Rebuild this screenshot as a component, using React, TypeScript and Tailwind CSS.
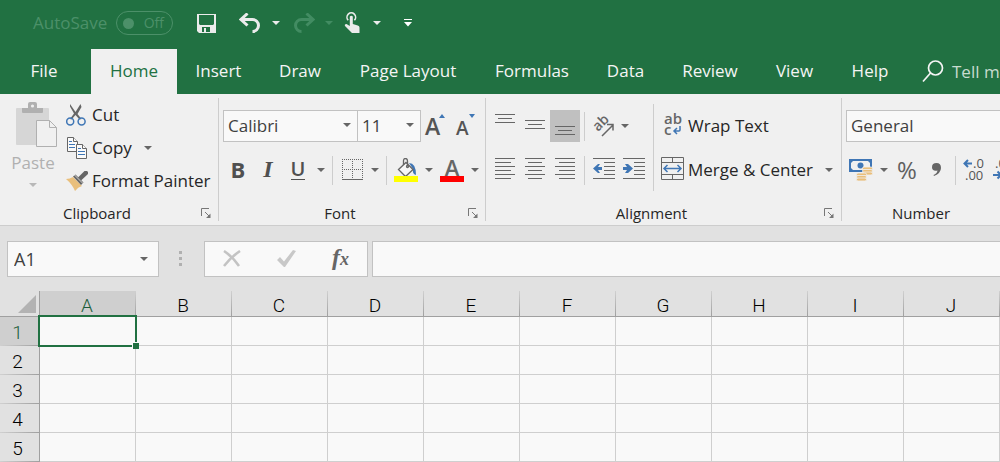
import type { ReactNode } from 'react'
import clsx from 'clsx'

const tabs = [
  { name: 'File', width: 'w-[88px] mr-[3px]' },
  { name: 'Home', width: 'w-[86px]' },
  { name: 'Insert', width: 'w-[83px]' },
  { name: 'Draw', width: 'w-[80px]' },
  { name: 'Page Layout', width: 'w-[136px]' },
  { name: 'Formulas', width: 'w-[112px]' },
  { name: 'Data', width: 'w-[75px]' },
  { name: 'Review', width: 'w-[94px]' },
  { name: 'View', width: 'w-[75px]' },
  { name: 'Help', width: 'w-[76px]' },
]

const columns = 'ABCDEFGHIJ'.split('')
const rows = [1, 2, 3, 4, 5]

function Caret({ className = 'fill-[#666]' }: { className?: string }) {
  return (
    <svg width="8" height="4" viewBox="0 0 8 4" aria-hidden="true" className={className}>
      <path d="M0 0h8L4 4z" />
    </svg>
  )
}

function DropButton({ label, caret, className }: { label: string; caret?: string; className?: string }) {
  return (
    <button aria-label={label} className={clsx('flex h-8 shrink-0 items-center justify-center', className ?? 'w-4')}>
      <Caret className={caret} />
    </button>
  )
}

function Tool({ label, active, children }: { label: string; active?: boolean; children: ReactNode }) {
  return (
    <button
      aria-label={label}
      className={clsx('flex h-8 w-[30px] shrink-0 items-center justify-center', active && 'bg-[#c0c0c0]')}
    >
      {children}
    </button>
  )
}

function Divider({ className }: { className?: string }) {
  return <span aria-hidden="true" className={clsx('mr-1 h-[29px] w-px shrink-0 bg-[#cdcdcd]', className ?? 'ml-[3px]')} />
}

function Group({ title, width, children }: { title: string; width: string; children: ReactNode }) {
  return (
    <section aria-label={title} className={clsx('flex shrink-0 flex-col border-r border-[#cdcdcd]', width)}>
      <div className="flex h-[107px]">{children}</div>
      <div className="flex h-4 items-center">
        <span className="flex-1 text-center text-[15px] leading-4">{title}</span>
        <button aria-label={`${title} settings`} className="flex w-6 justify-center">
          <svg width="10" height="10" viewBox="0 0 10 10" fill="none" stroke="#777">
            <path d="M.5 8V.5H8" />
            <path d="M4 4l4 4" />
            <path d="M9.500 5v5H5l4.500-4.500z" fill="#777" stroke="none" />
          </svg>
        </button>
      </div>
    </section>
  )
}

/* Horizontal rules given as [x, y, length] */
function Lines({ lines, width = 20, height }: { lines: number[][]; width?: number; height: number }) {
  return (
    <svg width={width} height={height} viewBox={`0 0 ${width} ${height}`} fill="#666" shapeRendering="crispEdges">
      {lines.map(([x, y, w]) => (
        <rect key={y} x={x} y={y} width={w} height="1" />
      ))}
    </svg>
  )
}

function IndentIcon({ right }: { right?: boolean }) {
  return (
    <svg width="22" height="24" viewBox="0 0 22 24">
      <g fill="#666" shapeRendering="crispEdges">
        <path d="M0 0h22v1H0zM11 4h11v1H11zM11 8h11v1H11zM11 12h11v1H11zM11 16h11v1H11zM0 20h22v1H0z" />
      </g>
      <path fill="#3f76b5" d={right ? 'M0 9h4L2 6h3l5 4.500-5 4.500H2l2-3H0z' : 'M9 9H5l2-3H5L0 10.500 5 15h2l-2-3h4z'} />
    </svg>
  )
}

function PasteIcon() {
  return (
    <svg width="42" height="46" viewBox="0 0 42 46">
      <rect y="6" width="33" height="37" rx="1" fill="#d6d6d6" />
      <path d="M6 6h6V2q0-2 2-2h5q2 0 2 2v4h6v4q0 1-1 1H7q-1 0-1-1z" fill="#b0b0b0" />
      <circle cx="16.500" cy="4" r="1.600" fill="#efefef" />
      <path d="M20.500 18.500h13l7 7v19h-20z" fill="#f0f0f0" stroke="#b0b0b0" />
      <path d="M33.500 18.500v7h7" fill="none" stroke="#b0b0b0" />
    </svg>
  )
}

function CutIcon() {
  return (
    <svg width="20" height="22" viewBox="0 0 20 22">
      <path d="M4 0l5.500 8 5-8 1 3-4 7 4 5-2 .5-4-4.500-4 4.500-1.500-.5 4-5.500-4-7z" fill="#666" />
      <g fill="none" stroke="#3f76b5" strokeWidth="1.500">
        <circle cx="4.200" cy="17.500" r="3.500" />
        <circle cx="15.600" cy="17.500" r="3.500" />
      </g>
    </svg>
  )
}

function CopyIcon() {
  return (
    <svg width="21" height="22" viewBox="0 0 21 22" fill="#fafafa" className="ml-px">
      <path d="M.5.500h6l4 4v10H.500z" stroke="#666" />
      <path d="M6.500.500v4h4" stroke="#666" />
      <path d="M2 4.500h3M2 7.500h6M2 10.500h6" stroke="#3f76b5" />
      <path d="M9.500 7.500h6l4 4v10h-10z" stroke="#666" />
      <path d="M15.500 7.500v4h4" stroke="#666" />
      <path d="M11 11.500h3M11 14.500h7M11 17.500h7" stroke="#3f76b5" />
    </svg>
  )
}

function PainterIcon() {
  return (
    <svg width="22" height="20" viewBox="0 0 22 20">
      <path d="M0 8q4 0 7-2l9 9q-4 1-7 5-3-7-9-12z" fill="#e9bf7c" />
      <path d="M7 5.500L9.500 3.500l8 8-2.500 2.500z" fill="#666" />
      <path d="M12 6.500L18.500 0H21l1 1v2l-7 6.500z" fill="#666" />
      <path d="M8.500 4l8.500 8.500" stroke="#f0f0f0" strokeWidth=".8" />
    </svg>
  )
}

function MoneyIcon() {
  return (
    <svg width="24" height="22" viewBox="0 0 24 22">
      <path d="M0 0h23v13H0z" fill="#3f76b5" />
      <path d="M4 2h15l2 2v5l-2 2H4L2 9V4z" fill="#f0f0f0" />
      <circle cx="11.500" cy="6.500" r="3" fill="#3f76b5" />
      <g fill="#e9bf7c" stroke="#f0f0f0" strokeWidth=".8">
        <rect x="13.500" y="8" width="10" height="3" rx="1.500" />
        <rect x="13.500" y="10.500" width="10" height="3" rx="1.500" />
        <rect x="13.500" y="13" width="10" height="3" rx="1.500" />
        <rect x="7.500" y="14" width="10" height="3" rx="1.500" />
        <rect x="7.500" y="16.500" width="10" height="3" rx="1.500" />
        <rect x="7.500" y="19" width="10" height="3" rx="1.500" />
      </g>
    </svg>
  )
}

function DecimalIcon({ less }: { less?: boolean }) {
  return (
    <svg width="24" height="24" viewBox="0 0 24 24" fontSize="13" fill="#555" className="overflow-visible">
      <text x={less ? 2 : 10} y="10">{less ? '.00' : '.0'}</text>
      <text x={less ? 10 : 2} y="22">{less ? '.0' : '.00'}</text>
      <path
        fill="none"
        stroke="#3f76b5"
        strokeWidth="2"
        d={less ? 'M0 17h8M4.500 13.500L8 17l-3.500 3.500' : 'M9 5.500H1.500M5 2L1.500 5.500 5 9'}
      />
    </svg>
  )
}

function TitleBar() {
  return (
    <div className="flex h-[49px] items-center pb-[3px] pl-[33px] text-[#4c9069]">
      <span id="autosave" className="w-[83px] text-[17px]">AutoSave</span>
      <button
        role="switch"
        aria-checked="false"
        aria-labelledby="autosave"
        className="flex h-6 w-[57px] items-center justify-between rounded-full border border-[#4c9069] pr-2 pl-1.5 text-sm"
      >
        <span className="size-[11px] rounded-full bg-[#4c9069]" />
        Off
      </button>
      <button aria-label="Save" className="ml-6 flex">
        <svg width="19" height="19" viewBox="0 0 19 19" fill="#ebebeb" fillRule="evenodd">
          <path d="M0 0h19v19H2l-2-2zM2 1v9l1 1h13l1-1V1zM5 13v5h2v-4h2v4h4v-5z" />
        </svg>
      </button>
      <button aria-label="Undo" className="ml-[23px] flex">
        <svg width="22" height="20" viewBox="0 0 22 20" fill="none" stroke="#ebebeb" strokeWidth="3">
          <path d="M2 6.500h11.500a6 6 0 0 1 0 12" />
          <path d="M8.500 .5L2 6.500l6.500 6" />
        </svg>
      </button>
      <DropButton label="Undo history" className="ml-[7px] w-4" caret="fill-[#ebebeb]" />
      <button aria-label="Redo" className="ml-[9px] flex">
        <svg width="22" height="20" viewBox="0 0 22 20" fill="none" stroke="#428c62" strokeWidth="3">
          <path d="M20 6.500H8.500a6 6 0 0 0 0 12" />
          <path d="M13.500 .5l6.500 6-6.500 6" />
        </svg>
      </button>
      <DropButton label="Redo history" className="ml-[6px] w-4" caret="fill-[#428c62]" />
      <button aria-label="Touch mode" className="ml-[7px] flex">
        <svg width="16" height="22" viewBox="0 0 16 22">
          <path d="M4.200 8.200a4.300 4.300 0 1 1 6.200 0" fill="none" stroke="#ebebeb" strokeWidth="1.600" />
          <path d="M5.800 4.500q1.500-1.500 3 0V12l5 1.500q1.700.5 1.700 2V21H8l-7-7q-.8-2 1.500-2l3.300 2z" fill="#ebebeb" />
        </svg>
      </button>
      <DropButton label="Touch mode options" className="ml-[9px] w-4" caret="fill-[#ebebeb]" />
      <button aria-label="Customize Quick Access Toolbar" className="ml-[19px] flex">
        <svg width="8" height="8" viewBox="0 0 8 8" fill="#fff">
          <path d="M0 0h8v1H0zM0 3h8L4 7.500z" />
        </svg>
      </button>
    </div>
  )
}

function Clipboard() {
  return (
    <Group title="Clipboard" width="w-[219px]">
      <button className="flex w-[66px] flex-col items-center pt-1 text-[#b0b0b0]">
        <span className="pl-2"><PasteIcon /></span>
        <span className="mt-[3px] text-[17px] leading-6">Paste</span>
        <span className="mt-2"><Caret className="fill-[#b8b8b8]" /></span>
      </button>
      <div className="flex flex-col">
        <button className="flex h-[33px] items-center">
          <span className="w-[26px]"><CutIcon /></span>Cut
        </button>
        <div className="flex h-[33px] items-center">
          <button className="flex items-center">
            <span className="w-[26px]"><CopyIcon /></span>Copy
          </button>
          <DropButton label="Copy options" className="ml-2 w-4" />
        </div>
        <button className="flex h-[33px] items-center whitespace-nowrap">
          <span className="w-[26px]"><PainterIcon /></span>Format Painter
        </button>
      </div>
    </Group>
  )
}

function Combo({ label, value, className }: { label: string; value: string; className: string }) {
  return (
    <div className={clsx('relative h-8 shrink-0 border border-[#c2c2c2] bg-[#f9f9f9]', className)}>
      <select aria-label={label} className="size-full appearance-none pl-1 text-[#404040] outline-none">
        <option>{value}</option>
      </select>
      <span className="pointer-events-none absolute top-3 right-1.5 flex"><Caret /></span>
    </div>
  )
}

function FontGroup() {
  return (
    <Group title="Font" width="w-[267px]">
      <div className="flex flex-col gap-3 pt-3 pl-1">
        <div className="flex">
          <Combo label="Font name" value="Calibri" className="w-[135px]" />
          <Combo label="Font size" value="11" className="-ml-px w-16" />
          <Tool label="Increase font size">
            <svg width="22" height="24" viewBox="0 0 22 24" className="overflow-visible">
              <text x="0" y="21" fontSize="23" fontWeight="600" fill="#555">A</text>
              <path d="M14 4l3-4 3 4z" fill="#3f76b5" />
            </svg>
          </Tool>
          <Tool label="Decrease font size">
            <svg width="22" height="24" viewBox="0 0 22 24" className="overflow-visible">
              <text x="1" y="21" fontSize="19" fontWeight="600" fill="#555">A</text>
              <path d="M14 0h6l-3 4z" fill="#3f76b5" />
            </svg>
          </Tool>
        </div>
        <div className="flex items-center text-[#505050]">
          <Tool label="Bold"><b className="pb-0.5 text-[22px] leading-6">B</b></Tool>
          <Tool label="Italic"><i className="pb-0.5 font-['Liberation_Serif',serif] text-2xl leading-6 font-bold">I</i></Tool>
          <Tool label="Underline">
            <span className="mb-0.5 border-b border-[#505050] text-xl leading-5 font-semibold">U</span>
          </Tool>
          <DropButton label="Underline options" />
          <Divider />
          <Tool label="Borders">
            <svg width="21" height="22" viewBox="0 0 21 22" stroke="#666" shapeRendering="crispEdges">
              <path d="M0 .5h21M0 10.500h21M.500 0v20M10.500 0v20M20.500 0v20" strokeDasharray="1 1" />
              <path d="M0 20.500h21" />
            </svg>
          </Tool>
          <DropButton label="Border options" />
          <Divider />
          <Tool label="Fill color">
            <svg width="24" height="24" viewBox="0 0 24 24" fill="none" stroke="#666" strokeWidth="1.300">
              <path d="M15 5q7 0 7 12-4-1-3-6z" fill="#3f76b5" stroke="none" />
              <path d="M4.500 11.500l7.500-7 7 7-7.500 7z" fill="#f7f7f7" />
              <path d="M9.500 7V3q0-2.500 2-2.500t2 2.500v5" />
              <circle cx="13.500" cy="8.500" r="1" />
              <path d="M0 18h24v6H0z" fill="#ff0" stroke="none" />
            </svg>
          </Tool>
          <DropButton label="Fill color options" />
          <Tool label="Font color">
            <svg width="24" height="24" viewBox="0 0 24 24" className="overflow-visible">
              <text x="12" y="18" textAnchor="middle" fontSize="22" fontWeight="600" fill="#666">A</text>
              <path d="M0 18h24v6H0z" fill="#f00" />
            </svg>
          </Tool>
          <DropButton label="Font color options" />
        </div>
      </div>
    </Group>
  )
}

function Alignment() {
  return (
    <Group title="Alignment" width="w-[356px]">
      <div className="flex flex-col gap-3 pt-3 pl-1">
        <div className="flex items-center">
          <Tool label="Top align"><Lines height={24} lines={[[0, 0, 20], [3, 4, 14], [0, 8, 20]]} /></Tool>
          <Tool label="Middle align"><Lines height={12} lines={[[0, 0, 20], [3, 4, 14], [0, 8, 20]]} /></Tool>
          <Tool label="Bottom align" active><Lines height={24} lines={[[0, 12, 20], [3, 16, 14], [0, 20, 20]]} /></Tool>
          <Divider className="ml-1" />
          <Tool label="Orientation">
            <svg width="22" height="24" viewBox="0 0 22 24" className="overflow-visible">
              <text x="5" y="18" fontSize="14" fontWeight="600" fill="#666" transform="rotate(-45 5 18)">ab</text>
              <path d="M9 22L19.500 11.500M14 10.500h6v6" fill="none" stroke="#666" strokeWidth="1.500" />
            </svg>
          </Tool>
          <DropButton label="Orientation options" className="w-3" />
        </div>
        <div className="flex items-center">
          <Tool label="Align left">
            <Lines height={24} lines={[[0, 0, 20], [0, 4, 16], [0, 8, 20], [0, 12, 16], [0, 16, 20], [0, 20, 16]]} />
          </Tool>
          <Tool label="Center">
            <Lines height={24} lines={[[0, 0, 20], [3, 4, 14], [0, 8, 20], [3, 12, 14], [0, 16, 20], [3, 20, 14]]} />
          </Tool>
          <Tool label="Align right">
            <Lines height={24} lines={[[0, 0, 20], [4, 4, 16], [0, 8, 20], [4, 12, 16], [0, 16, 20], [4, 20, 16]]} />
          </Tool>
          <Divider className="ml-1" />
          <Tool label="Decrease indent"><IndentIcon /></Tool>
          <Tool label="Increase indent"><IndentIcon right /></Tool>
        </div>
      </div>
      <span aria-hidden="true" className="mt-1.5 ml-1 h-[87px] w-px bg-[#cdcdcd]" />
      <div className="flex flex-1 flex-col gap-3 pt-3 pr-1 pl-1">
        <button className="flex h-8 items-center">
          <span className="flex w-[30px] justify-center">
            <svg width="20" height="24" viewBox="0 0 20 24" fontSize="15" fontWeight="600" fill="#666" className="overflow-visible">
              <text x="1" y="10">ab</text>
              <text x="1" y="21">c</text>
              <path d="M17 12v4q0 1-1 1h-5M14 14l-3 3 3 3" fill="none" stroke="#3f76b5" strokeWidth="1.500" />
            </svg>
          </span>
          Wrap Text
        </button>
        <div className="flex h-8 items-center">
          <button className="flex items-center whitespace-nowrap">
            <span className="flex w-[30px] justify-center">
              <svg width="24" height="26" viewBox="0 0 24 26" fill="none" stroke="#666">
                <path d="M.5.500h22v22H.500zM.500 5.500h22M.500 17.500h22M11.500.500v5M11.500 17.500v5" />
                <path d="M3 11.500h17M6.500 8L3 11.500 6.500 15M16.500 8l3.500 3.500-3.500 3.500" stroke="#3f76b5" strokeWidth="1.500" />
              </svg>
            </span>
            Merge &amp; Center
          </button>
          <DropButton label="Merge options" className="ml-auto w-4" />
        </div>
      </div>
    </Group>
  )
}

function NumberGroup() {
  return (
    <Group title="Number" width="w-[183px]">
      <div className="flex flex-1 flex-col gap-3 pt-3 pl-1">
        <Combo label="Number format" value="General" className="w-[174px]" />
        <div className="flex items-center text-[#606060]">
          <Tool label="Accounting format"><MoneyIcon /></Tool>
          <DropButton label="Currency options" />
          <Tool label="Percent style"><span className="text-2xl leading-6">%</span></Tool>
          <Tool label="Comma style">
            <svg width="10" height="14" viewBox="0 0 10 14" fill="#666">
              <path d="M4.500 0Q9 0 9 5T2 13l-.5-1q3.500-1.500 4-4.500Q0 8.500 0 4.200 0 0 4.500 0z" />
            </svg>
          </Tool>
          <Divider />
          <Tool label="Increase decimal"><DecimalIcon /></Tool>
          <Tool label="Decrease decimal"><DecimalIcon less /></Tool>
        </div>
      </div>
    </Group>
  )
}

function FormulaBar() {
  return (
    <div className="flex h-[66px] items-center border-t border-[#cdcdcd] pl-[7px]">
      <div className="flex h-9 w-[152px] shrink-0 items-center border border-[#c2c2c2] bg-[#f9f9f9]">
        <input aria-label="Name box" defaultValue="A1" className="min-w-0 flex-1 pl-1.5 text-lg text-[#404040] outline-none" />
        <DropButton label="Named ranges" className="mr-1.5 w-4" />
      </div>
      <span aria-hidden="true" className="mx-5 flex flex-col gap-[3px]">
        <span className="size-[3px] bg-[#b0b0b0]" />
        <span className="size-[3px] bg-[#b0b0b0]" />
        <span className="size-[3px] bg-[#b0b0b0]" />
      </span>
      <div className="ml-0.5 flex h-9 w-[164px] shrink-0 items-center justify-around border border-[#c2c2c2] bg-[#f9f9f9]">
        <button aria-label="Cancel">
          <svg width="18" height="17" viewBox="0 0 18 17" fill="none" stroke="#c3c3c3" strokeWidth="2.500">
            <path d="M1 1q9 6 15 15M17 1Q8 7 1 16" />
          </svg>
        </button>
        <button aria-label="Enter">
          <svg width="19" height="17" viewBox="0 0 19 17" fill="#c8c8c8">
            <path d="M0 10l3-3 4 4.500L16 0l3 1L8 17H7z" />
          </svg>
        </button>
        <button
          aria-label="Insert function"
          className="flex items-baseline pb-0.5 font-['Liberation_Serif',serif] font-bold text-[#666] italic"
        >
          <span className="text-2xl leading-6">f</span>
          <span className="text-lg leading-6">x</span>
        </button>
      </div>
      <input aria-label="Formula bar" className="ml-1 h-9 min-w-0 flex-1 border border-r-0 border-[#c2c2c2] bg-[#f9f9f9] px-2 outline-none" />
    </div>
  )
}

function Sheet() {
  return (
    <div className="overflow-hidden">
      <table className="w-full table-fixed border-separate border-spacing-0 font-[Roboto,sans-serif] text-[19px] leading-5 text-black">
        <thead>
          <tr>
            <th className="h-[26px] w-10 border-r border-b border-[#a0a0a0] p-0">
              <svg width="18" height="18" viewBox="0 0 18 18" aria-label="Select all" className="ml-[18px] fill-[#b3b3b3]">
                <path d="M18 0v18H0z" />
              </svg>
            </th>
            {columns.map((c) => (
              <th
                key={c}
                scope="col"
                className={clsx(
                  'relative h-[26px] border-b border-[#a0a0a0] p-0 pt-1 pr-0.5 font-light after:absolute after:inset-y-0 after:right-0 after:w-px after:bg-linear-to-b after:from-[#d0d0d0] after:to-[#a0a0a0]',
                  c === 'A' && 'bg-[#cfcfcf] text-[#1c5e3a]',
                )}
              >
                {c}
              </th>
            ))}
          </tr>
        </thead>
        <tbody>
          {rows.map((r) => (
            <tr key={r}>
              <th
                scope="row"
                className={clsx(
                  'relative h-[29px] border-r border-[#a0a0a0] p-0 pt-0.5 pr-1 font-light after:absolute after:inset-x-0 after:bottom-0 after:h-px after:bg-linear-to-r after:from-[#d0d0d0] after:to-[#a0a0a0]',
                  r === 1 && 'bg-[#cfcfcf] text-[#1c5e3a]',
                )}
              >
                {r}
              </th>
              {columns.map((c) => (
                <td key={c} className="relative h-[29px] border-r border-b border-[#cfcfcf] bg-[#f9f9f9] p-0">
                  {c === 'A' && r === 1 && (
                    <span className="absolute -inset-0.5 z-10 border-2 border-[#217142]">
                      <span className="absolute -right-1 -bottom-1 size-[7px] border-t border-l border-[#f9f9f9] bg-[#217142]" />
                    </span>
                  )}
                </td>
              ))}
            </tr>
          ))}
        </tbody>
      </table>
    </div>
  )
}

export default function App() {
  return (
    <main className="overflow-hidden bg-[#e1e1e1] font-['Open_Sans',sans-serif] text-[17px] text-[#262626]">
      <header className="bg-[#217142]">
        <TitleBar />
        <nav className="flex h-[45px] text-[17px] text-[#f5f5f5]">
          {tabs.map(({ name, width }) => (
            <a
              key={name}
              href={`#${name}`}
              className={clsx(
                'flex shrink-0 items-center justify-center pb-0.5 whitespace-nowrap',
                width,
                name === 'Home' && 'bg-[#f0f0f0] text-[#217142]',
              )}
            >
              {name}
            </a>
          ))}
          <button className="ml-3.5 flex shrink-0 items-center gap-2 text-[#c8dccf]">
            <svg width="22" height="24" viewBox="0 0 22 24" fill="none" stroke="#f5f5f5" strokeWidth="1.700">
              <circle cx="13.500" cy="8" r="7" />
              <path d="M8.500 13L1 21.500" />
            </svg>
            Tell me
          </button>
        </nav>
      </header>
      <div className="flex h-[131px] overflow-hidden bg-[#f0f0f0] py-1">
        <Clipboard />
        <FontGroup />
        <Alignment />
        <NumberGroup />
      </div>
      <FormulaBar />
      <Sheet />
    </main>
  )
}
